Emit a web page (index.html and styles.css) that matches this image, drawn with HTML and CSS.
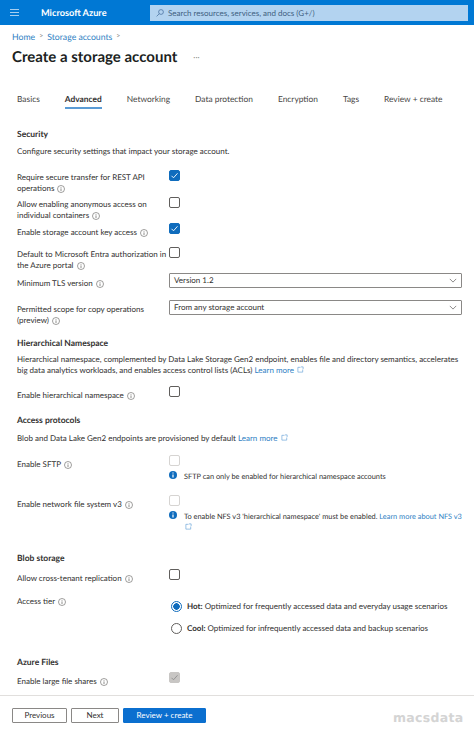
FILE: index.html
```html
<!DOCTYPE html>
<html lang="en">
<head>
    <meta charset="UTF-8">
    <meta name="viewport" content="width=device-width, initial-scale=1.0">
    <title>Create a storage account</title>
    <link rel="stylesheet" href="styles.css">
</head>
<body>
    <svg class="defs" width="0" height="0">
        <symbol id="tip" viewBox="0 0 8 8">
            <circle cx="4" cy="4" r="3.5" fill="none" stroke="#605e5c" stroke-width="0.6"/>
            <path d="M4 3.400V6M4 2v.7" fill="none" stroke="#605e5c" stroke-width="0.7"/>
        </symbol>
        <symbol id="ext" viewBox="0 0 8 8">
            <path d="M4 1.500H1V7h5.500V4M4.500 1h2.500v2.500" fill="none" stroke="#5a9bd5" stroke-width="0.7"/>
        </symbol>
        <symbol id="chev" viewBox="0 0 10 6">
            <path d="M1 1l4 4 4-4" fill="none" stroke="#605e5c" stroke-width="0.9"/>
        </symbol>
        <symbol id="note" viewBox="0 0 8 8">
            <circle cx="4" cy="4" r="4" fill="#0f6cbd"/>
            <path d="M4 3.400V6.400M4 1.500v1" fill="none" stroke="#fff" stroke-width="1.200"/>
        </symbol>
    </svg>

    <header class="topbar">
        <svg class="burger" width="9" height="7" viewBox="0 0 9 7"><path d="M0 .5h9M0 3.500h9M0 6.500h9" stroke="#cfe4f7" stroke-width="0.8"/></svg>
        <span class="brand">Microsoft Azure</span>
        <div class="search">
            <svg width="8" height="8" viewBox="0 0 8 8"><circle cx="5" cy="3" r="2.400" fill="none" stroke="#41699a" stroke-width="0.7"/><path d="M3.300 4.700L.6 7.400" stroke="#41699a" stroke-width="0.7"/></svg>
            Search resources, services, and docs (G+/)
        </div>
    </header>

    <nav class="crumbs">
        <a>Home</a><span class="sep">&gt;</span><a>Storage accounts</a><span class="sep">&gt;</span>
    </nav>
    <div class="title-row">
        <h1>Create a storage account</h1>
        <span class="more">···</span>
    </div>

    <div class="tabs">
        <span class="tab">Basics</span>
        <span class="tab active">Advanced</span>
        <span class="tab">Networking</span>
        <span class="tab">Data protection</span>
        <span class="tab">Encryption</span>
        <span class="tab">Tags</span>
        <span class="tab">Review + create</span>
    </div>

    <main class="form">
        <h2 class="first">Security</h2>
        <p class="desc">Configure security settings that impact your storage account.</p>

        <div class="row h27 intro">
            <div class="label">Require secure transfer for REST API operations <svg class="tip"><use href="#tip"/></svg></div>
            <div><span class="cb on"><svg viewBox="0 0 11 11"><path d="M2.500 5.800l2 2 4-4.500" fill="none" stroke="#fff" stroke-width="0.9"/></svg></span></div>
        </div>
        <div class="row h26 l2">
            <div class="label">Allow enabling anonymous access on individual containers <svg class="tip"><use href="#tip"/></svg></div>
            <div><span class="cb"></span></div>
        </div>
        <div class="row h24 l3">
            <div class="label">Enable storage account key access <svg class="tip"><use href="#tip"/></svg></div>
            <div><span class="cb on"><svg viewBox="0 0 11 11"><path d="M2.500 5.800l2 2 4-4.500" fill="none" stroke="#fff" stroke-width="0.9"/></svg></span></div>
        </div>
        <div class="row h26 l2">
            <div class="label">Default to Microsoft Entra authorization in the Azure portal <svg class="tip"><use href="#tip"/></svg></div>
            <div><span class="cb"></span></div>
        </div>
        <div class="row h27 l4">
            <div class="label">Minimum TLS version <svg class="tip"><use href="#tip"/></svg></div>
            <div class="select">Version 1.2<svg width="8" height="5"><use href="#chev"/></svg></div>
        </div>
        <div class="row l3">
            <div class="label">Permitted scope for copy operations (preview) <svg class="tip"><use href="#tip"/></svg></div>
            <div class="select">From any storage account<svg width="8" height="5"><use href="#chev"/></svg></div>
        </div>

        <h2 class="s-hier">Hierarchical Namespace</h2>
        <div class="desc">
            <div>Hierarchical namespace, complemented by Data Lake Storage Gen2 endpoint, enables file and directory semantics, accelerates</div>
            <div><span>big data analytics workloads, and enables access control lists (ACLs)</span> <a class="link">Learn more</a> <svg class="ext"><use href="#ext"/></svg></div>
        </div>
        <div class="row hier-row l3">
            <div class="label">Enable hierarchical namespace <svg class="tip"><use href="#tip"/></svg></div>
            <div><span class="cb"></span></div>
        </div>

        <h2 class="s-access">Access protocols</h2>
        <p class="desc">Blob and Data Lake Gen2 endpoints are provisioned by default <a class="link">Learn more</a> <svg class="ext"><use href="#ext"/></svg></p>
        <div class="row sftp-row l3">
            <div class="label">Enable SFTP <svg class="tip"><use href="#tip"/></svg></div>
            <div>
                <span class="cb off"></span>
                <div class="note"><svg><use href="#note"/></svg><span>SFTP can only be enabled for hierarchical namespace accounts</span></div>
            </div>
        </div>
        <div class="row nfs-row l3">
            <div class="label">Enable network file system v3 <svg class="tip"><use href="#tip"/></svg></div>
            <div>
                <span class="cb off"></span>
                <div class="note"><svg><use href="#note"/></svg><span>To enable NFS v3 'hierarchical namespace' must be enabled. <a class="link">Learn more about NFS v3</a> <svg class="ext"><use href="#ext"/></svg></span></div>
            </div>
        </div>

        <h2 class="s-blob">Blob storage</h2>
        <div class="row cross-row l3">
            <div class="label">Allow cross-tenant replication <svg class="tip"><use href="#tip"/></svg></div>
            <div><span class="cb"></span></div>
        </div>
        <div class="row tier-row">
            <div class="label">Access tier <svg class="tip"><use href="#tip"/></svg></div>
            <div class="radios">
                <div class="radio-line"><span class="radio sel"></span><span><b>Hot:</b> Optimized for frequently accessed data and everyday usage scenarios</span></div>
                <div class="radio-line"><span class="radio"></span><span><b>Cool:</b> Optimized for infrequently accessed data and backup scenarios</span></div>
            </div>
        </div>

        <h2 class="s-files">Azure Files</h2>
        <div class="row l3">
            <div class="label">Enable large file shares <svg class="tip"><use href="#tip"/></svg></div>
            <div><span class="cb locked"><svg viewBox="0 0 11 11"><path d="M2.500 5.800l2 2 4-4.500" fill="none" stroke="#8f8f8f" stroke-width="0.9"/></svg></span></div>
        </div>
    </main>

    <footer class="actions">
        <button class="btn prev">Previous</button>
        <button class="btn next">Next</button>
        <button class="btn primary">Review + create</button>
        <span class="mark">macsdata</span>
    </footer>
</body>
</html>
```

FILE: styles.css
```css
html, body {
    margin: 0;
    padding: 0;
}
body {
    font-family: 'Lato', sans-serif;
    font-size: 8px;
    line-height: 11px;
    color: #323130;
    background: #fff;
    width: 474px;
    height: 731px;
    overflow: hidden;
    position: relative;
    text-rendering: geometricPrecision;
}
.defs {
    position: absolute;
}
.topbar {
    height: 25px;
    background-color: #0078d4;
    display: flex;
    align-items: center;
    color: #fff;
}
.burger {
    margin-left: 10px;
}
.brand {
    margin-left: 22px;
    width: 109px;
    font-size: 9.2px;
    font-weight: 700;
}
.search {
    width: 318px;
    height: 16px;
    background-color: #b3d3f0;
    display: flex;
    align-items: center;
    gap: 4px;
    padding-left: 6px;
    box-sizing: border-box;
    color: #3f5f80;
    margin-top: 1px;
}
.crumbs {
    height: 22px;
    padding-left: 12px;
    display: flex;
    align-items: center;
    font-size: 8.7px;
}
.crumbs a {
    color: #2f7fc4;
}
.sep {
    color: #8a8886;
    margin: 0 4px;
    font-size: 7px;
}
.title-row {
    height: 20px;
    padding-left: 12px;
    display: flex;
    align-items: center;
}
h1 {
    margin: 0;
    font-size: 15px;
    font-weight: 700;
    color: #201f1e;
}
.more {
    margin-left: 16px;
    color: #8a8886;
    font-size: 8px;
}
.tabs {
    margin: 23px 0 0 17px;
    display: flex;
    gap: 25px;
    height: 19px;
    font-size: 8.4px;
}
.tab {
    padding-top: 4px;
    box-sizing: border-box;
    color: #484644;
}
.tab.active {
    font-weight: 700;
    color: #323130;
    border-bottom: 2px solid #5a9bd5;
}
.form {
    padding: 0 12px 0 17px;
}
h2 {
    margin: 0;
    font-size: 8.5px;
    font-weight: 700;
    line-height: 12px;
}
h2.first {
    margin-top: 19px;
}
.desc {
    margin: 6px 0 0;
}
.row {
    display: grid;
    grid-template-columns: 152px 1fr;
    align-items: start;
}
.h27 { height: 27px; }
.h26 { height: 26px; }
.h24 { height: 24px; }
.intro { margin-top: 13px; }
.intro .label { padding-top: 2px; }
.l2 .label { padding-top: 2px; }
.l3 .label { padding-top: 4px; }
.l4 .label { padding-top: 5px; }
.tip {
    width: 8px;
    height: 8px;
    margin-left: 1px;
    vertical-align: -1.5px;
}
.ext {
    width: 7px;
    height: 7px;
    margin-left: 1px;
}
.link {
    color: #2f7fc4;
}
.cb {
    display: block;
    width: 11px;
    height: 11px;
    box-sizing: border-box;
    border: 1px solid #605e5c;
    border-radius: 2px;
}
.cb svg {
    display: block;
    width: 11px;
    height: 11px;
    margin: -1px;
}
.cb.on {
    background-color: #0f6cbd;
    border-color: #0f6cbd;
}
.cb.off {
    border-color: #d6d4d2;
}
.cb.locked {
    background-color: #c8c6c4;
    border-color: #c8c6c4;
}
.select {
    height: 15px;
    width: 293px;
    box-sizing: border-box;
    border: 1px solid #8a8886;
    border-radius: 1px;
    padding: 0 4px;
    display: flex;
    align-items: center;
    justify-content: space-between;
}
.s-hier { margin-top: 11px; }
.s-hier + .desc { margin-top: 5px; }
.hier-row { margin-top: 10px; }
.s-access { margin-top: 13px; }
.s-access + .desc { margin-top: 7px; }
.sftp-row { margin-top: 11px; height: 40px; }
.note {
    display: flex;
    margin-top: 5px;
    gap: 7px;
    align-items: flex-start;
    font-size: 7.4px;
}
.note > svg {
    width: 8px;
    height: 8px;
    flex: none;
}
.nfs-row { height: 44px; }
.s-blob { margin-top: 13px; }
.cross-row { margin-top: 5px; height: 27px; }
.tier-row { height: 45px; }
.tier-row .label { padding-top: 0; }
.radios {
    padding-top: 5px;
    display: flex;
    flex-direction: column;
    gap: 11px;
}
.radio-line {
    display: flex;
    align-items: center;
    gap: 5px;
    margin-left: 2px;
}
.radio-line b {
    font-weight: 700;
}
.radio {
    width: 11px;
    height: 11px;
    box-sizing: border-box;
    border: 1px solid #605e5c;
    border-radius: 50%;
    flex: none;
}
.radio.sel {
    border-color: #0f6cbd;
    background: radial-gradient(circle, #0f6cbd 0 3px, #fff 3.5px);
}
.s-files { margin-top: 15px; }
.s-files + .row { margin-top: 4px; }
.actions {
    position: absolute;
    left: 0;
    right: 0;
    bottom: 0;
    height: 36px;
    border-top: 1px solid #e1dfdd;
    padding: 12px 0 0 12px;
    box-sizing: border-box;
    display: flex;
    gap: 4px;
    align-items: flex-start;
}
.btn {
    font: inherit;
    height: 15px;
    padding: 0;
    background: #fff;
    border: 1px solid #8a8886;
    border-radius: 1px;
    color: #323130;
}
.prev { width: 55px; }
.next { width: 48px; }
.primary {
    width: 83px;
    background-color: #0b6fcf;
    border-color: #0b6fcf;
    color: #fff;
}
.mark {
    position: absolute;
    left: 393px;
    top: 16px;
    font-family: 'DejaVu Sans', sans-serif;
    font-size: 12.5px;
    font-weight: 700;
    letter-spacing: 0.3px;
    color: #d4d4d4;
}
```
